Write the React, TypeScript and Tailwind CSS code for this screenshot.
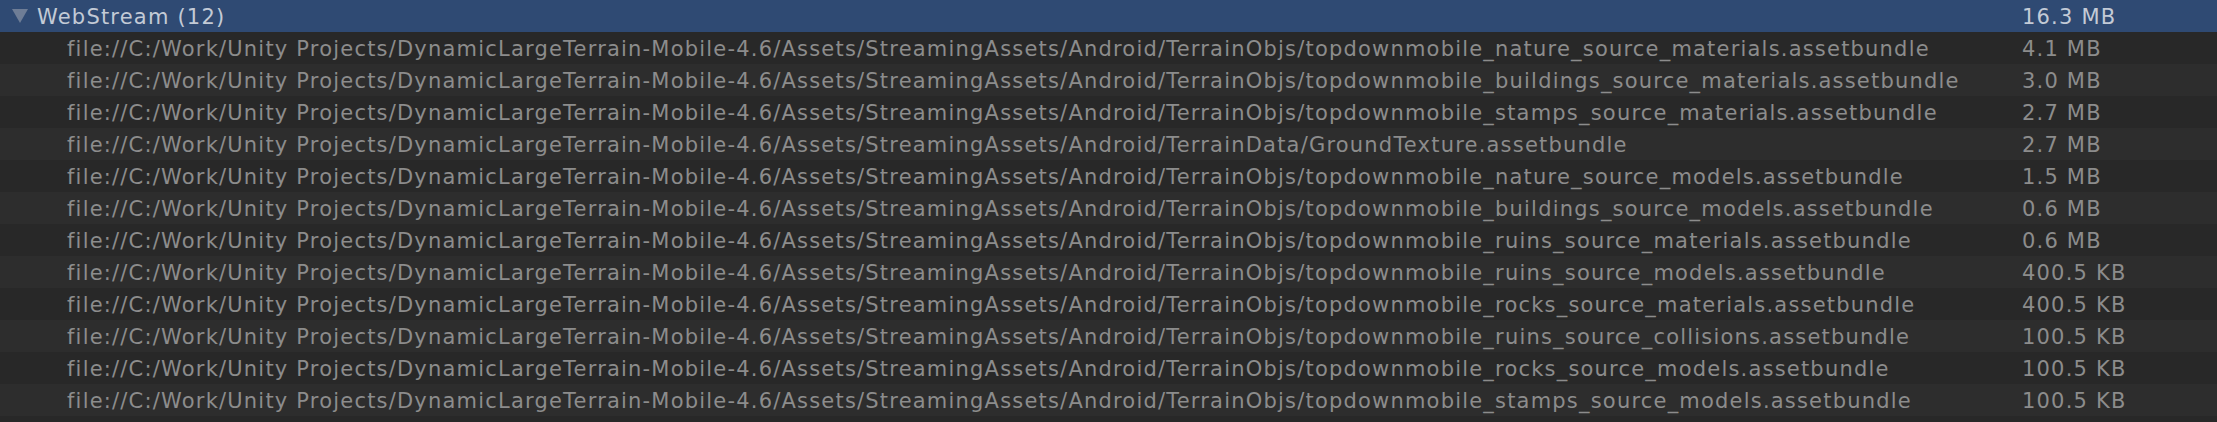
const base =
  'file://C:/Work/Unity Projects/DynamicLargeTerrain-Mobile-4.6/Assets/StreamingAssets/Android/';

const bundles = [
  { path: 'TerrainObjs/topdownmobile_nature_source_materials.assetbundle', size: '4.1 MB' },
  { path: 'TerrainObjs/topdownmobile_buildings_source_materials.assetbundle', size: '3.0 MB' },
  { path: 'TerrainObjs/topdownmobile_stamps_source_materials.assetbundle', size: '2.7 MB' },
  { path: 'TerrainData/GroundTexture.assetbundle', size: '2.7 MB' },
  { path: 'TerrainObjs/topdownmobile_nature_source_models.assetbundle', size: '1.5 MB' },
  { path: 'TerrainObjs/topdownmobile_buildings_source_models.assetbundle', size: '0.6 MB' },
  { path: 'TerrainObjs/topdownmobile_ruins_source_materials.assetbundle', size: '0.6 MB' },
  { path: 'TerrainObjs/topdownmobile_ruins_source_models.assetbundle', size: '400.5 KB' },
  { path: 'TerrainObjs/topdownmobile_rocks_source_materials.assetbundle', size: '400.5 KB' },
  { path: 'TerrainObjs/topdownmobile_ruins_source_collisions.assetbundle', size: '100.5 KB' },
  { path: 'TerrainObjs/topdownmobile_rocks_source_models.assetbundle', size: '100.5 KB' },
  { path: 'TerrainObjs/topdownmobile_stamps_source_models.assetbundle', size: '100.5 KB' },
];

export default function App() {
  return (
    <main className="min-h-[422px] w-full bg-[#282828] font-['DejaVu_Sans',sans-serif] text-[21px] leading-none tracking-[1.2px]">
      {/* Group header */}
      <div className="grid h-8 grid-cols-[1fr_195px] items-center bg-[#2f4a73] pt-[3px] text-[#c3cad6]">
        <div className="flex items-center">
          <span className="ml-3 mr-[9px] -mt-[3px] h-0 w-0 border-x-[8px] border-t-[14px] border-x-transparent border-t-[#6e7d96]" />
          <span>WebStream (12)</span>
        </div>
        <span>16.3 MB</span>
      </div>

      {/* Bundle rows */}
      {bundles.map((b, i) => (
        <div
          key={b.path}
          className={`grid h-8 grid-cols-[1fr_195px] items-center pt-[3px] text-[#8c8c8c] ${
            i % 2 === 0 ? 'bg-[#282828]' : 'bg-[#2d2d2d]'
          }`}
        >
          <span className="pl-[67px] whitespace-nowrap">{base + b.path}</span>
          <span>{b.size}</span>
        </div>
      ))}
    </main>
  );
}
